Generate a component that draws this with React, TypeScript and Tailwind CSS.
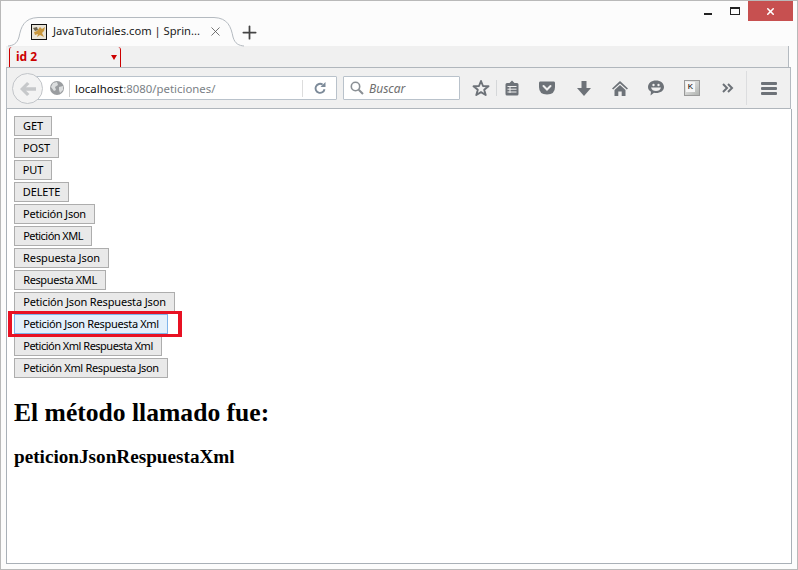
import { Plus, X } from 'lucide-react';

// widths and tracking per button, Tahoma's X and m run narrower than Noto's
const buttons = [
  { label: 'GET', size: 'w-[38px] tracking-[-0.15px]' },
  { label: 'POST', size: 'w-[45px] tracking-[-0.15px]' },
  { label: 'PUT', size: 'w-[38px] tracking-[-0.15px]' },
  { label: 'DELETE', size: 'w-[55px] tracking-[-0.15px]' },
  { label: 'Petición Json', size: 'w-[81px] tracking-[-0.23px]' },
  { label: 'Petición XML', size: 'w-[78px] tracking-[-0.55px]' },
  { label: 'Respuesta Json', size: 'w-[95px] tracking-[-0.08px]' },
  { label: 'Respuesta XML', size: 'w-[92px] tracking-[-0.38px]' },
  { label: 'Petición Json Respuesta Json', size: 'w-[161px] tracking-[-0.15px]' },
  { label: 'Petición Json Respuesta Xml', size: 'w-[154px] tracking-[-0.33px]' },
  { label: 'Petición Xml Respuesta Xml', size: 'w-[148px] tracking-[-0.5px]' },
  { label: 'Petición Xml Respuesta Json', size: 'w-[154px] tracking-[-0.33px]' },
];

const iconColor = '#6d7278';

function TabShape() {
  return (
    <svg className="absolute left-[7px] top-[16px]" width="236" height="30" viewBox="0 0 236 30">
      <path
        d="M0 29 C5 28.5 9 27 11 20 C13 10 16 1 30 0.5 L206 0.5 C220 1 223 10 225 20 C227 27 231 28.5 236 29 Z"
        fill="#fcfcfc"
        stroke="none"
      />
      <path
        d="M0 29 C5 28.5 9 27 11 20 C13 10 16 1 30 0.5 L206 0.5 C220 1 223 10 225 20 C227 27 231 28.5 236 29"
        fill="none"
        stroke="#b4bac0"
      />
    </svg>
  );
}

function Favicon() {
  return (
    <svg width="16" height="16" viewBox="0 0 16 16" className="shrink-0">
      <rect x="0.5" y="0.5" width="15" height="15" fill="#e9e4d8" stroke="#111" />
      <path d="M3 8 L6 7 L9 3 L11 5 L14 3 L13 7 L11 9 L13 13 L9 11 L6 13 L7 10 L4 11 Z" fill="#c8963c" />
      <path d="M2 4 L6 3 L7 6 L4 7 Z" fill="#6b6350" />
    </svg>
  );
}

function Globe() {
  return (
    <svg width="16" height="16" viewBox="0 0 16 16" className="shrink-0">
      <circle cx="8" cy="8" r="7" fill="#9a9da0" />
      <path d="M4 3 L8 2 L9 5 L6 7 L7 10 L5 11 L2 7 Z M10 7 L14 6 L14 10 L11 13 L10 10 Z" fill="#dcdedf" />
    </svg>
  );
}

function NavIcons() {
  return (
    <div className="flex items-center h-full">
      {/* star */}
      <svg width="18" height="18" viewBox="0 0 18 18" className="ml-[12px]">
        <path d="M9 2 L11 7 L16.5 7.3 L12.2 10.8 L13.7 16 L9 13.1 L4.3 16 L5.8 10.8 L1.5 7.3 L7 7 Z" fill="none" stroke={iconColor} strokeWidth="1.9" strokeLinejoin="round" />
      </svg>
      <div className="w-px h-[16px] bg-[#d5d7d9] ml-[6px]" />
      {/* reading list */}
      <svg width="14" height="16" viewBox="0 0 14 16" className="ml-[8px]">
        <path d="M0.5 4.5 Q0.5 3 2 3 H4.5 L7 0.5 L9.5 3 H12 Q13.5 3 13.5 4.5 V14 Q13.5 15.5 12 15.5 H2 Q0.5 15.5 0.5 14 Z" fill={iconColor} />
        <path d="M2.5 6.5 H11.5 M2.5 9.2 H11.5 M2.5 12 H11.5 M5 6 V13" stroke="#f0f0f0" strokeWidth="1" />
      </svg>
      {/* pocket */}
      <svg width="16" height="14" viewBox="0 0 16 14" className="ml-[20px]">
        <path d="M1 0.5 H15 Q16 0.5 16 2 V6 Q16 13.5 8 13.5 Q0 13.5 0 6 V2 Q0 0.5 1 0.5 Z" fill={iconColor} />
        <path d="M4.5 5 L8 8.5 L11.5 5" fill="none" stroke="#f0f0f0" strokeWidth="2" strokeLinecap="round" />
      </svg>
      {/* download */}
      <svg width="14" height="15" viewBox="0 0 14 15" className="ml-[22px]">
        <path d="M4.5 0 H9.5 V7 H14 L7 15 L0 7 H4.5 Z" fill={iconColor} />
      </svg>
      {/* home */}
      <svg width="16" height="15" viewBox="0 0 16 15" className="ml-[21px]">
        <path d="M8 0 L16 7.5 L14.8 8.6 L8 2.4 L1.2 8.6 L0 7.5 Z" fill={iconColor} />
        <path d="M8 4 L13.5 9 V15 H9.7 V10.5 H6.3 V15 H2.5 V9 Z" fill={iconColor} />
      </svg>
      {/* chat smile */}
      <svg width="16" height="16" viewBox="0 0 16 16" className="ml-[20px]">
        <path d="M8 0.5 C12.5 0.5 16 3.2 16 7 C16 10.8 12.5 13 8 13 C7.3 13 6.7 13 6 12.8 L2.5 15.5 L3 11.8 C1 10.6 0 9 0 7 C0 3.2 3.5 0.5 8 0.5 Z" fill={iconColor} />
        <circle cx="5.5" cy="5" r="1.2" fill="#f0f0f0" />
        <circle cx="10.5" cy="5" r="1.2" fill="#f0f0f0" />
        <path d="M3 7.5 H13 Q12 11 8 11 Q4 11 3 7.5 Z" fill="#f0f0f0" />
      </svg>
      {/* K key */}
      <div className="ml-[20px] w-[16px] h-[16px] border border-[#9a9a9a] bg-[linear-gradient(135deg,#f2f2f2,#b0b3b0)] flex">
        <div className="ml-[1px] mt-[1px] w-[9px] h-[10px] bg-[#f6f6f6] text-[8px] leading-[10px] text-center text-black font-['Liberation_Sans',sans-serif]">
          K
        </div>
      </div>
      {/* overflow chevrons */}
      <svg width="12" height="10" viewBox="0 0 12 10" className="ml-[22px]">
        <path d="M1 1 L5 5 L1 9 M6 1 L10 5 L6 9" fill="none" stroke={iconColor} strokeWidth="2" />
      </svg>
      <div className="w-px h-[34px] bg-[#dcdddf] ml-[12px]" />
      {/* hamburger */}
      <div className="ml-[14px] flex flex-col gap-[2px]">
        <div className="w-[16px] h-[3px] rounded-[1px] bg-[#6d7278]" />
        <div className="w-[16px] h-[3px] rounded-[1px] bg-[#6d7278]" />
        <div className="w-[16px] h-[3px] rounded-[1px] bg-[#6d7278]" />
      </div>
    </div>
  );
}

export default function App() {
  return (
    <div className="w-[798px] h-[570px] border border-[#b9b9b9] bg-[#fcfcfc] flex flex-col overflow-hidden font-['Noto_Sans',sans-serif]">
      {/* Title bar + tabs */}
      <div className="relative h-[45px] shrink-0 pl-[6px] flex">
        <TabShape />
        <div className="relative mt-[16px] ml-[24px] w-[198px] h-[29px] flex items-center">
          <Favicon />
          <span className="ml-[6px] text-[11.2px] text-[#1a1a1a] whitespace-nowrap">JavaTutoriales.com | Sprin...</span>
          <X className="absolute left-[177px] top-[7px] w-[15px] h-[15px] text-[#555]" strokeWidth={1.3} />
        </div>
        <Plus className="relative mt-[21px] ml-[10px] w-[21px] h-[21px] text-[#444]" strokeWidth={2} />
        <div className="ml-auto flex items-start pr-[4px]">
          <div className="mt-[12px] w-[8px] h-[2px] bg-[#222] mr-[18px]" />
          <div className="mt-[6px] w-[10px] h-[8px] border border-[#222] border-t-2 mr-[8px]" />
          <div className="w-[45px] h-[20px] bg-[#c75050] flex items-center justify-center">
            <X className="w-[11px] h-[11px] text-white" strokeWidth={3.4} />
          </div>
        </div>
      </div>

      {/* Toolbar with the id strip */}
      <div className="h-[21px] shrink-0 ml-[5px] mr-[8px] bg-[#f0f0f0] pl-[3px] flex items-end border-r border-[#b4bac0]">
        <div className="w-[112px] h-[20px] border-x border-[#cc0000] rounded-t-[3px] flex items-center justify-between pl-[6px] pr-[3px] bg-[#f2f2f2]">
          <span className="text-[12px] font-bold text-[#cc0000] leading-none">id 2</span>
          <div className="w-0 h-0 border-x-[3px] border-x-transparent border-t-[5px] border-t-[#cc0000]" />
        </div>
      </div>

      {/* Navigation bar */}
      <div className="h-[42px] shrink-0 ml-[5px] mr-[6px] bg-[#f0f0f0] border-t border-b border-[#b0b6bc] border-x border-x-[#b4bac0] flex items-center relative">
        <div className="absolute left-[5px] top-[5px] w-[31px] h-[31px] rounded-full border border-[#c2c5c9] bg-[#f3f3f3] flex items-center justify-center z-10">
          <svg width="16" height="14" viewBox="0 0 16 14">
            <path d="M7 0 L0 7 L7 14 L9.5 12 L6 8.8 H16 V5.2 H6 L9.5 2 Z" fill="#c6c8ca" />
          </svg>
        </div>
        <div className="ml-[18px] w-[312px] h-[24px] bg-white border border-[#b9c2cb] rounded-[1px] flex items-center pl-[23px]">
          <Globe />
          <div className="w-px h-[17px] bg-[#ccc] ml-[4px]" />
          <span className="ml-[5px] pt-[1px] text-[11.4px] text-[#111] whitespace-nowrap">
            localhost<span className="text-[#7a7f86]">:8080/peticiones/</span>
          </span>
          <div className="ml-auto w-px h-[17px] bg-[#ddd] mr-[1px]" />
          <svg width="12" height="12" viewBox="0 0 12 12" className="ml-[10px] mr-[10px]">
            <path d="M10.5 7.2 A4.5 4.5 0 1 1 8.6 2.6" fill="none" stroke="#7c8a99" strokeWidth="1.9" />
            <path d="M6.5 5 H11.5 V0 Z" fill="#7c8a99" />
          </svg>
        </div>
        <div className="ml-[6px] w-[117px] h-[24px] bg-white border border-[#b9c2cb] rounded-[1px] flex items-center pl-[6px]">
          <svg width="14" height="14" viewBox="0 0 14 14">
            <circle cx="5.5" cy="5.5" r="4.2" fill="none" stroke="#8a8f94" strokeWidth="1.6" />
            <path d="M8.7 8.7 L13 13" stroke="#8a8f94" strokeWidth="2" />
          </svg>
          <span className="ml-[5px] pt-[1px] text-[12px] italic text-[#6f6f6f]">Buscar</span>
        </div>
        <NavIcons />
      </div>

      {/* Page */}
      <div className="flex-1 ml-[5px] mr-[5px] mb-[5px] bg-white border-x border-b border-[#a9b0b7] pl-[7px] pt-[7px]">
        <div className="flex flex-col items-start gap-[2px]">
          {buttons.map(({ label, size }) => {
            const isActive = label === 'Petición Json Respuesta Xml';
            return (
              <div key={label} className={isActive ? 'relative' : ''}>
                <button
                  className={`block h-[20px] border text-[11px] leading-[18px] text-center text-black whitespace-nowrap font-['Noto_Sans',sans-serif] ${size} ${
                    isActive ? 'border-[#7eb4ea] bg-[#e3f0fb]' : 'border-[#adadad] bg-[#e9e9e9]'
                  }`}
                >
                  {label}
                </button>
                {isActive && (
                  <div className="absolute left-[-6px] top-[-3px] w-[174px] h-[26px] border-x-4 border-y-[3px] border-[#e81123]" />
                )}
              </div>
            );
          })}
        </div>
        <h1 className="mt-[21px] text-[25.6px] leading-[28px] font-bold text-black font-['Liberation_Serif',serif]">
          El método llamado fue:
        </h1>
        <h3 className="mt-[19px] text-[19.2px] leading-[22px] font-bold text-black font-['Liberation_Serif',serif]">
          peticionJsonRespuestaXml
        </h3>
      </div>
    </div>
  );
}
